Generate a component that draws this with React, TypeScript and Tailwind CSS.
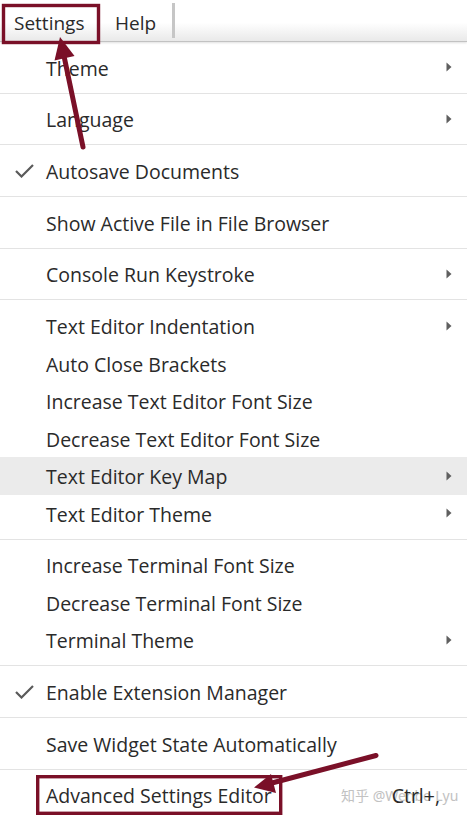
import React from "react";

type Item = {
  label: string;
  checked?: boolean;
  sub?: boolean;
  active?: boolean;
  shortcut?: string;
};

const groups: Item[][] = [
  [{ label: "Theme", sub: true }],
  [{ label: "Language", sub: true }],
  [{ label: "Autosave Documents", checked: true }],
  [{ label: "Show Active File in File Browser" }],
  [{ label: "Console Run Keystroke", sub: true }],
  [
    { label: "Text Editor Indentation", sub: true },
    { label: "Auto Close Brackets" },
    { label: "Increase Text Editor Font Size" },
    { label: "Decrease Text Editor Font Size" },
    { label: "Text Editor Key Map", sub: true, active: true },
    { label: "Text Editor Theme", sub: true },
  ],
  [
    { label: "Increase Terminal Font Size" },
    { label: "Decrease Terminal Font Size" },
    { label: "Terminal Theme", sub: true },
  ],
  [{ label: "Enable Extension Manager", checked: true }],
  [{ label: "Save Widget State Automatically" }],
  [{ label: "Advanced Settings Editor", shortcut: "Ctrl+," }],
];

function Check() {
  return (
    <svg width="19" height="14" viewBox="0 0 19 14" className="absolute left-[15px] top-1/2 -translate-y-1/2">
      <polyline points="1,7 6.5,12.5 18,1" fill="none" stroke="#5a5a5a" strokeWidth="2.2" />
    </svg>
  );
}

function Caret() {
  return (
    <svg width="6" height="10" viewBox="0 0 6 10" className="shrink-0">
      <polygon points="0.5,0.5 5.5,5 0.5,9.5" fill="#5f5f5f" />
    </svg>
  );
}

function Row({ item }: { item: Item }) {
  return (
    <div
      className={`relative flex h-[37.5px] items-center pl-[46px] pr-[15px] ${item.active ? "bg-[#ebebeb]" : ""}`}
    >
      {item.checked && <Check />}
      <span className="flex-1 whitespace-nowrap pt-[2px]">{item.label}</span>
      {item.shortcut && <span className="mr-[6px] whitespace-nowrap pt-[2px]">{item.shortcut}</span>}
      {item.sub ? <Caret /> : <span className="w-[6px]" />}
    </div>
  );
}

export default function App() {
  return (
    <div
      className="relative h-[815px] w-[467px] overflow-hidden bg-white text-[#2a2a2a]"
      style={{ fontFamily: '"Open Sans", "Noto Sans", sans-serif' }}
    >
      {/* menubar */}
      <div className="relative z-10 flex h-[42px] items-stretch border-b border-[#c2c2c2] bg-gradient-to-b from-white from-55% to-[#e9e9e9] shadow-[0_1px_2px_rgba(0,0,0,0.12)]">
        <div className="flex w-[100px] items-center pl-[14px] pt-[5px] text-[19px]">Settings</div>
        <div className="flex w-[72px] items-center pl-[15px] pt-[5px] text-[19px]">Help</div>
        <div className="my-[3px] w-[3px] bg-[#c6c6c6]" />
      </div>

      {/* watermark (behind the menu text) */}
      <div
        className="pointer-events-none absolute left-[341px] top-[786px] z-0 whitespace-nowrap text-[14px] leading-[20px] text-[#c2c2c2]"
        style={{ fontFamily: '"Noto Sans", "Noto Sans CJK SC", sans-serif' }}
      >
        知乎 @Wenbo Lyu
      </div>

      {/* menu */}
      <div className="relative z-10 flex flex-col text-[19.5px]">
        {groups.map((g, gi) => (
          <div key={gi} className={`py-[6.6px] ${gi > 0 ? "border-t border-[#e3e3e3]" : ""}`}>
            {g.map((it) => (
              <Row key={it.label} item={it} />
            ))}
          </div>
        ))}
      </div>

      {/* annotations */}
      <svg className="pointer-events-none absolute inset-0 z-20" width="467" height="815" viewBox="0 0 467 815">
        <rect x="3.5" y="5.5" width="95" height="37" fill="none" stroke="#7a1028" strokeWidth="3.4" />
        <rect x="37.7" y="776.7" width="243" height="36.6" fill="none" stroke="#7a1028" strokeWidth="3.4" />
        <line x1="83" y1="147" x2="64" y2="56" stroke="#7a1028" strokeWidth="5" strokeLinecap="round" />
        <polygon points="60,37 74.5,56 54.5,60.5" fill="#7a1028" />
        <line x1="376" y1="755.5" x2="270" y2="783.5" stroke="#7a1028" strokeWidth="5" strokeLinecap="round" />
        <polygon points="254,787.5 271,774 276,793" fill="#7a1028" />
      </svg>
    </div>
  );
}
